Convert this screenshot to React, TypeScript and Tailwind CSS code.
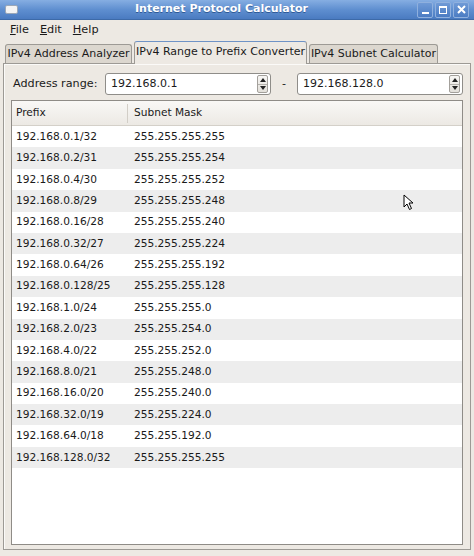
import React from "react";

const rows: [string, string][] = [
  ["192.168.0.1/32", "255.255.255.255"],
  ["192.168.0.2/31", "255.255.255.254"],
  ["192.168.0.4/30", "255.255.255.252"],
  ["192.168.0.8/29", "255.255.255.248"],
  ["192.168.0.16/28", "255.255.255.240"],
  ["192.168.0.32/27", "255.255.255.224"],
  ["192.168.0.64/26", "255.255.255.192"],
  ["192.168.0.128/25", "255.255.255.128"],
  ["192.168.1.0/24", "255.255.255.0"],
  ["192.168.2.0/23", "255.255.254.0"],
  ["192.168.4.0/22", "255.255.252.0"],
  ["192.168.8.0/21", "255.255.248.0"],
  ["192.168.16.0/20", "255.255.240.0"],
  ["192.168.32.0/19", "255.255.224.0"],
  ["192.168.64.0/18", "255.255.192.0"],
  ["192.168.128.0/32", "255.255.255.255"],
];

const font = { fontFamily: '"DejaVu Sans", Verdana, sans-serif' };

function SpinBox({ value }: { value: string }) {
  return (
    <div className="flex h-[22px] flex-1 items-center rounded-[3px] border border-[#8f8d89] bg-white pl-[5px] pr-[2px]">
      <span className="flex-1 text-[11px] text-[#1a1a1a]">{value}</span>
      <div className="flex h-[18px] w-[11px] flex-col rounded-[2px] border border-[#a3a09b] bg-gradient-to-b from-[#f7f6f4] to-[#e3e0da]">
        <div className="flex flex-1 items-center justify-center border-b border-[#b5b2ad]">
          <svg width="6" height="4" viewBox="0 0 6 4">
            <path d="M0 4 L3 0 L6 4 Z" fill="#222" />
          </svg>
        </div>
        <div className="flex flex-1 items-center justify-center">
          <svg width="6" height="4" viewBox="0 0 6 4">
            <path d="M0 0 L3 4 L6 0 Z" fill="#222" />
          </svg>
        </div>
      </div>
    </div>
  );
}

function WinButton({ children }: { children: React.ReactNode }) {
  return (
    <div className="flex h-[16px] w-[16px] items-center justify-center rounded-[2px] border border-[#8fb0de] bg-gradient-to-b from-[#6f9ad6] to-[#4b7cc3]">
      {children}
    </div>
  );
}

export default function App() {
  return (
    <div
      className="relative flex h-[556px] w-[474px] flex-col overflow-hidden bg-[#ede9e3] text-[#1a1a1a]"
      style={font}
    >
      {/* title bar */}
      <div className="flex h-[20px] items-center border-b border-[#3d6aa8] bg-gradient-to-b from-[#86aee2] via-[#5f8fd0] to-[#4a7bc1] px-[5px]">
        <div className="h-[9px] w-[13px] rounded-[2px] border border-[#9aa7b8] bg-[#f4f4f4]" />
        <div className="flex-1 pl-[8px] text-center text-[11px] font-bold text-white [text-shadow:0_1px_0_#2f5a96]">
          Internet Protocol Calculator
        </div>
        <div className="flex gap-[2px]">
          <WinButton>
            <div className="mt-[6px] h-[2px] w-[7px] bg-white" />
          </WinButton>
          <WinButton>
            <div className="h-[8px] w-[8px] border-[1.5px] border-t-[2px] border-white" />
          </WinButton>
          <WinButton>
            <svg width="9" height="9" viewBox="0 0 9 9">
              <path d="M1 1 L8 8 M8 1 L1 8" stroke="white" strokeWidth="2" />
            </svg>
          </WinButton>
        </div>
      </div>

      {/* menu bar */}
      <div className="flex h-[21px] items-center gap-[11px] pl-[10px] text-[11.3px]">
        <span><span className="underline">F</span>ile</span>
        <span><span className="underline">E</span>dit</span>
        <span><span className="underline">H</span>elp</span>
      </div>

      {/* tabs */}
      <div className="flex h-[22px] items-end gap-[2px] whitespace-nowrap pl-[5px] text-[11px]">
        <div className="flex h-[19px] w-[127px] items-center justify-center rounded-t-[3px] border border-b-0 border-[#9d9a95] bg-[#dcd7cf]">
          IPv4 Address Analyzer
        </div>
        <div className="relative z-10 -mb-px flex h-[23px] w-[173px] items-center justify-center rounded-t-[3px] border border-b-0 border-[#9d9a95] border-t-[#6f93c6] bg-[#ede9e3] pb-[2px]">
          IPv4 Range to Prefix Converter
        </div>
        <div className="flex h-[19px] w-[129px] items-center justify-center rounded-t-[3px] border border-b-0 border-[#9d9a95] bg-[#dcd7cf]">
          IPv4 Subnet Calculator
        </div>
      </div>

      {/* page */}
      <div className="mx-[3px] mb-[6px] flex flex-1 flex-col border border-[#9d9a95] px-[7px] pb-[4px] pt-[9px] shadow-[inset_1px_1px_0_#fbfaf8]">
        <div className="flex items-center">
          <span className="w-[94px] pl-[2px] text-[11.2px]">Address range:</span>
          <SpinBox value="192.168.0.1" />
          <span className="w-[26px] text-center text-[11.2px]">-</span>
          <SpinBox value="192.168.128.0" />
        </div>

        <div className="mt-[5px] flex flex-1 flex-col border border-[#8f8c87] bg-white">
          <div className="flex h-[25px] items-center border-b border-[#d4d0c9] bg-gradient-to-b from-[#f9f8f6] to-[#ece9e4] text-[10.6px]">
            <div className="w-[115px] pl-[4px]">Prefix</div>
            <div className="h-[19px] w-px bg-[#d2cec7]" />
            <div className="pl-[6px]">Subnet Mask</div>
          </div>
          {rows.map(([p, m], i) => (
            <div
              key={p}
              className={`flex h-[21.4px] items-center text-[10.6px] ${i % 2 === 1 ? "bg-[#ededed]" : "bg-white"}`}
            >
              <div className="w-[116px] pl-[4px]">{p}</div>
              <div className="pl-[6px]">{m}</div>
            </div>
          ))}
        </div>
      </div>

      {/* pointer */}
      <svg className="absolute left-[403px] top-[194px]" width="12" height="17" viewBox="0 0 12 17">
        <path d="M1 1 L1 13 L4 10 L6.5 15.5 L8.5 14.5 L6 9 L10 9 Z" fill="white" stroke="black" strokeWidth="1" strokeLinejoin="round" />
      </svg>
    </div>
  );
}
